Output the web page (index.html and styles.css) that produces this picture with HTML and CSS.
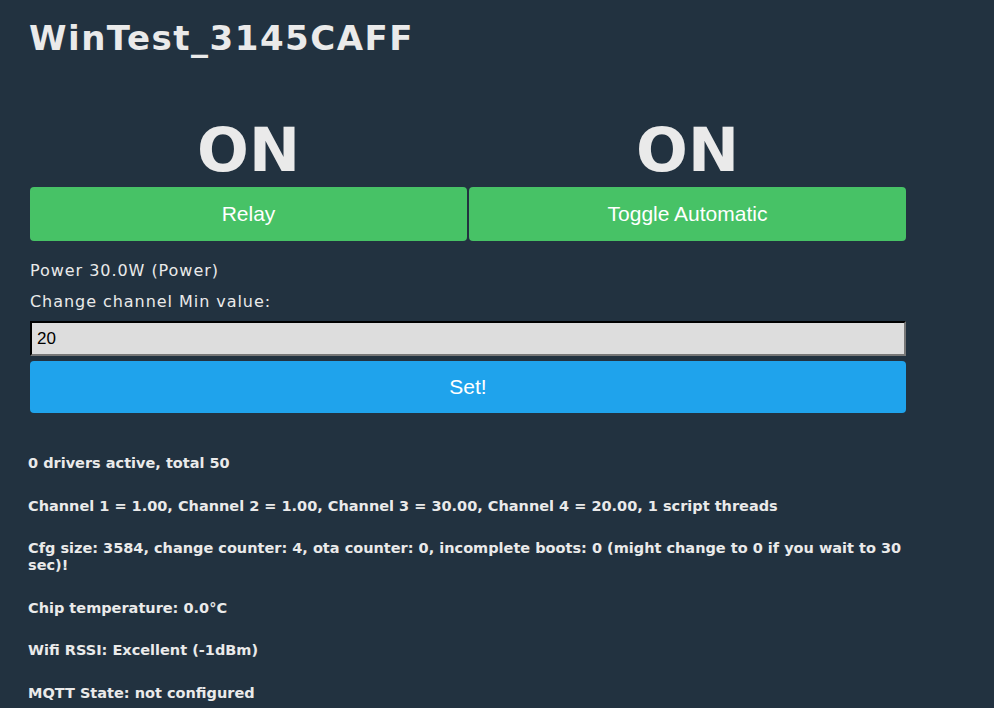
FILE: index.html
```html
<!DOCTYPE html>
<html>
<head>
<meta charset="utf-8">
<title>WinTest_3145CAFF</title>
<link rel="stylesheet" href="styles.css">
</head>
<body>
<div class="page">
  <h1 class="title">WinTest_3145CAFF</h1>
  <div class="states">
    <div class="state">ON</div>
    <div class="state">ON</div>
  </div>
  <div class="toggles">
    <button class="btn btn-green">Relay</button>
    <button class="btn btn-green">Toggle Automatic</button>
  </div>
  <p class="line power">Power 30.0W (Power)</p>
  <p class="line">Change channel Min value:</p>
  <input class="field" type="text" value="20">
  <button class="btn btn-blue">Set!</button>
  <div class="info">
    <h5>0 drivers active, total 50</h5>
    <h5>Channel 1 = 1.00, Channel 2 = 1.00, Channel 3 = 30.00, Channel 4 = 20.00, 1 script threads</h5>
    <h5>Cfg size: 3584, change counter: 4, ota counter: 0, incomplete boots: 0 (might change to 0 if you wait to 30 sec)!</h5>
    <h5>Chip temperature: 0.0°C</h5>
    <h5>Wifi RSSI: Excellent (-1dBm)</h5>
    <h5>MQTT State: not configured</h5>
  </div>
</div>
</body>
</html>
```
FILE: styles.css
```css
html, body {
  margin: 0;
  padding: 0;
  background: #223240;
}
body {
  color: #eaeaea;
  font-family: "DejaVu Sans", Verdana, sans-serif;
  font-size: 16px;
}
.page {
  width: 876px;
  padding: 0 0 0 30px;
}
.title {
  margin: 0 0 0 -1px;
  padding-top: 14px;
  font-size: 34px;
  font-weight: bold;
  line-height: 48px;
  letter-spacing: 1.5px;
}
.states {
  display: grid;
  grid-template-columns: 1fr 1fr;
  gap: 2px;
  margin-top: 52px;
}
.state {
  text-align: center;
  font-size: 61px;
  font-weight: bold;
  line-height: 72px;
}
.toggles {
  display: grid;
  grid-template-columns: 1fr 1fr;
  gap: 2px;
  margin-top: 1px;
}
.btn {
  display: block;
  width: 100%;
  border: 0;
  border-radius: 4px;
  color: #fff;
  font-family: "Liberation Sans", Arial, sans-serif;
  font-size: 21px;
  padding: 0;
  margin: 0;
}
.btn-green {
  background: #47c266;
  height: 54px;
}
.btn-blue {
  background: #1fa3ec;
  height: 52px;
  margin-top: 5px;
}
.line {
  margin: 0;
  line-height: 31px;
  letter-spacing: 0.95px;
}
.power {
  margin-top: 14px;
}
.field {
  display: block;
  box-sizing: border-box;
  width: 100%;
  height: 35px;
  margin-top: 4px;
  padding: 0 5px;
  background: #dddddd;
  color: #000;
  border: 2px inset #777;
  border-top-color: #222;
  border-left-color: #222;
  font-family: "Liberation Sans", Arial, sans-serif;
  font-size: 17px;
}
.info {
  margin-left: -2px;
  margin-top: 42px;
}
.info h5 {
  margin: 0 0 25.5px;
  font-size: 14.5px;
  line-height: 17px;
  font-weight: bold;
}
```
